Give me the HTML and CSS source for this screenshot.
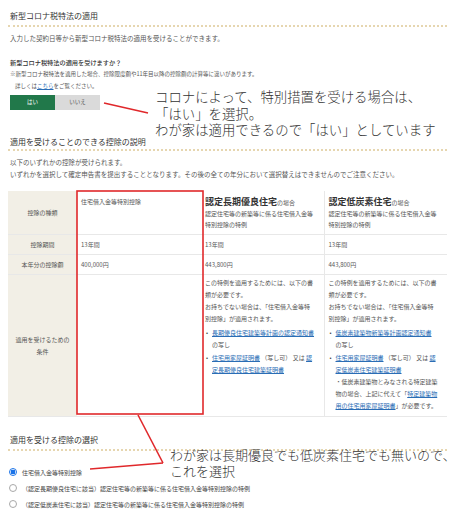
FILE: index.html
```html
<!DOCTYPE html>
<html lang="ja">
<head>
<meta charset="utf-8">
<title>新型コロナ税特法の適用</title>
<link rel="stylesheet" href="styles.css">
</head>
<body>
<div class="page">
  <section class="sec">
    <h2 class="sec-title">新型コロナ税特法の適用</h2>
    <p class="lead">入力した契約日等から新型コロナ税特法の適用を受けることができます。</p>
    <div class="question">
      <p class="q-title">新型コロナ税特法の適用を受けますか？</p>
      <p class="note">※新型コロナ税特法を適用した場合、控除限度額や11年目以降の控除額の計算等に違いがあります。</p>
      <p class="note note-more">詳しくは<a class="link" href="#">こちら</a>をご覧ください。</p>
      <div class="toggle">
        <span class="btn btn-on">はい</span>
        <span class="btn btn-off">いいえ</span>
      </div>
    </div>
  </section>

  <section class="sec sec-explain">
    <h2 class="sec-title">適用を受けることのできる控除の説明</h2>
    <p class="body-text">以下のいずれかの控除が受けられます。<br>いずれかを選択して確定申告書を提出することとなります。その後の全ての年分において選択替えはできませんのでご注意ください。</p>
    <table class="deduct">
      <colgroup>
        <col class="c-label"><col class="c-std"><col class="c-long"><col class="c-low">
      </colgroup>
      <tr class="r-type">
        <th>控除の種類</th>
        <td>住宅借入金等特別控除</td>
        <td class="wide"><div><span class="kind">認定長期優良住宅</span>の場合</div><div>認定住宅等の新築等に係る住宅借入金等特別控除の特例</div></td>
        <td class="wide"><div><span class="kind">認定低炭素住宅</span>の場合</div><div>認定住宅等の新築等に係る住宅借入金等特別控除の特例</div></td>
      </tr>
      <tr class="r-short">
        <th>控除期間</th>
        <td>13年間</td>
        <td class="wide">13年間</td>
        <td class="wide">13年間</td>
      </tr>
      <tr class="r-short">
        <th>本年分の控除額</th>
        <td>400,000円</td>
        <td class="wide">443,800円</td>
        <td class="wide">443,800円</td>
      </tr>
      <tr class="r-cond">
        <th>適用を受けるための条件</th>
        <td></td>
        <td class="wide">
          <p>この特例を適用するためには、以下の書類が必要です。<br>お持ちでない場合は、「住宅借入金等特別控除」が適用されます。</p>
          <ul class="docs">
            <li><a class="link" href="#">長期優良住宅建築等計画の認定通知書</a><br>の写し</li>
            <li><a class="link" href="#">住宅用家屋証明書</a> （写し可） 又は <a class="link" href="#">認定長期優良住宅建築証明書</a></li>
          </ul>
        </td>
        <td class="wide">
          <p>この特例を適用するためには、以下の書類が必要です。<br>お持ちでない場合は、「住宅借入金等特別控除」が適用されます。</p>
          <ul class="docs">
            <li><a class="link" href="#">低炭素建築物新築等計画認定通知書</a><br>の写し</li>
            <li><a class="link" href="#">住宅用家屋証明書</a> （写し可） 又は <a class="link" href="#">認定低炭素住宅建築証明書</a><br>・低炭素建築物とみなされる特定建築物の場合、上記に代えて「<a class="link" href="#">特定建築物用の住宅用家屋証明書</a>」が必要です。</li>
          </ul>
        </td>
      </tr>
    </table>
  </section>

  <section class="sec sec-choice">
    <h2 class="sec-title">適用を受ける控除の選択</h2>
    <ul class="choices">
      <li class="choice"><span class="radio radio-on"></span>住宅借入金等特別控除</li>
      <li class="choice"><span class="radio"></span>（認定長期優良住宅に該当）認定住宅等の新築等に係る住宅借入金等特別控除の特例</li>
      <li class="choice"><span class="radio"></span>（認定低炭素住宅に該当）認定住宅等の新築等に係る住宅借入金等特別控除の特例</li>
    </ul>
  </section>

  <svg class="marks" width="474" height="513" viewBox="0 0 474 513" aria-hidden="true">
    <line x1="104" y1="103" x2="148" y2="113" />
    <rect x="77" y="191" width="126" height="223" />
    <line x1="138" y1="415" x2="163" y2="463" />
    <line x1="90" y1="469" x2="163" y2="463" />
  </svg>

  <div class="memo memo-yes">コロナによって、特別措置を受ける場合は、<br>「はい」を選択。<br>わが家は適用できるので「はい」としています</div>
  <div class="memo memo-pick">わが家は長期優良でも低炭素住宅でも無いので、<br>これを選択</div>
</div>
</body>
</html>
```

FILE: styles.css
```css
* {
  box-sizing: border-box;
  margin: 0;
  padding: 0;
}

body {
  margin: 0;
  background: #fff;
  font-family: "Noto Sans CJK JP", "Noto Sans", sans-serif;
  color: #555;
}

.page {
  position: relative;
  width: 474px;
  height: 513px;
  overflow: hidden;
  padding: 10px 27px 0 8px;
}

.sec-title {
  font-size: 8px;
  line-height: 12px;
  font-weight: 400;
  color: #333;
  padding: 0 2px 3px;
  border-bottom: 2px dotted #e6d6b0;
}

.lead {
  font-size: 6.5px;
  line-height: 10px;
  margin-top: 6px;
  padding-left: 2px;
}

.question {
  margin-top: 15px;
  padding-left: 2px;
}

.q-title {
  font-size: 6.2px;
  line-height: 10px;
  font-weight: 500;
  color: #333;
}

.note {
  font-size: 5.5px;
  line-height: 12px;
}

.note-more {
  padding-left: 5px;
}

.link {
  color: #2a6db5;
  text-decoration: underline;
}

.toggle {
  display: flex;
  margin-top: 3px;
}

.btn {
  width: 45px;
  height: 15px;
  font-size: 5.5px;
  line-height: 15px;
  text-align: center;
}

.btn-on {
  background: #21784a;
  color: #fff;
}

.btn-off {
  background: #dadada;
  color: #555;
}

.sec-explain {
  margin-top: 26px;
}

.sec-explain .sec-title {
  padding-bottom: 1px;
}

.body-text {
  font-size: 6.5px;
  line-height: 12px;
  margin-top: 5px;
  padding-left: 2px;
}

.deduct {
  width: 439px;
  margin-top: 11px;
  table-layout: fixed;
  border-collapse: collapse;
  font-size: 6px;
  line-height: 11px;
}

.c-label { width: 69px; }
.c-std { width: 124px; }
.c-long { width: 123px; }
.c-low { width: 123px; }

.deduct th,
.deduct td {
  border-bottom: 1px solid #e8e8e8;
  vertical-align: top;
  padding: 4px 4px 4px 4px;
  text-align: left;
  font-weight: 400;
}

.deduct th {
  background: #f2efe6;
  text-align: center;
  vertical-align: middle;
  padding: 4px 5px;
}

.deduct td.wide {
  padding-right: 9px;
}

.deduct tr > td:nth-child(3) {
  border-right: 1px solid #e8e8e8;
}

.r-type td {
  padding-top: 5px;
}

.kind {
  font-size: 9px;
  font-weight: 700;
  color: #333;
}

.r-cond td {
  line-height: 12px;
  padding-top: 2px;
}

.r-cond th {
  line-height: 12px;
}

.docs {
  list-style: none;
  margin-top: 2px;
}

.docs li {
  position: relative;
  padding-left: 7px;
}

.docs li + li {
  margin-top: 1px;
}

.docs li::before {
  content: "•";
  position: absolute;
  left: 1px;
  top: 0;
  color: #444;
}

.sec-choice {
  margin-top: 17px;
}

.sec-choice .sec-title {
  padding-bottom: 3px;
}

.choices {
  list-style: none;
  margin-top: 13px;
  padding-left: 1px;
}

.choice {
  display: flex;
  align-items: center;
  height: 16px;
  font-size: 6px;
  color: #444;
}

.radio {
  width: 8px;
  height: 8px;
  border-radius: 50%;
  border: 1px solid #a8a8a8;
  margin-right: 5px;
  flex: none;
  background: #fff;
}

.radio-on {
  border-color: #1a73e8;
  background: radial-gradient(circle, #1a73e8 0 2.2px, #fff 2.6px);
}

.marks {
  position: absolute;
  top: 0;
  left: 0;
  pointer-events: none;
}

.marks line,
.marks rect {
  stroke: #e0282b;
  stroke-width: 1.6;
  fill: none;
}

.memo {
  position: absolute;
  color: #333;
  font-weight: 300;
  white-space: nowrap;
}

.memo-yes {
  left: 155px;
  top: 88px;
  font-size: 13.4px;
  line-height: 16.5px;
}

.memo-pick {
  left: 170px;
  top: 447px;
  font-size: 13px;
  line-height: 16px;
}
```
